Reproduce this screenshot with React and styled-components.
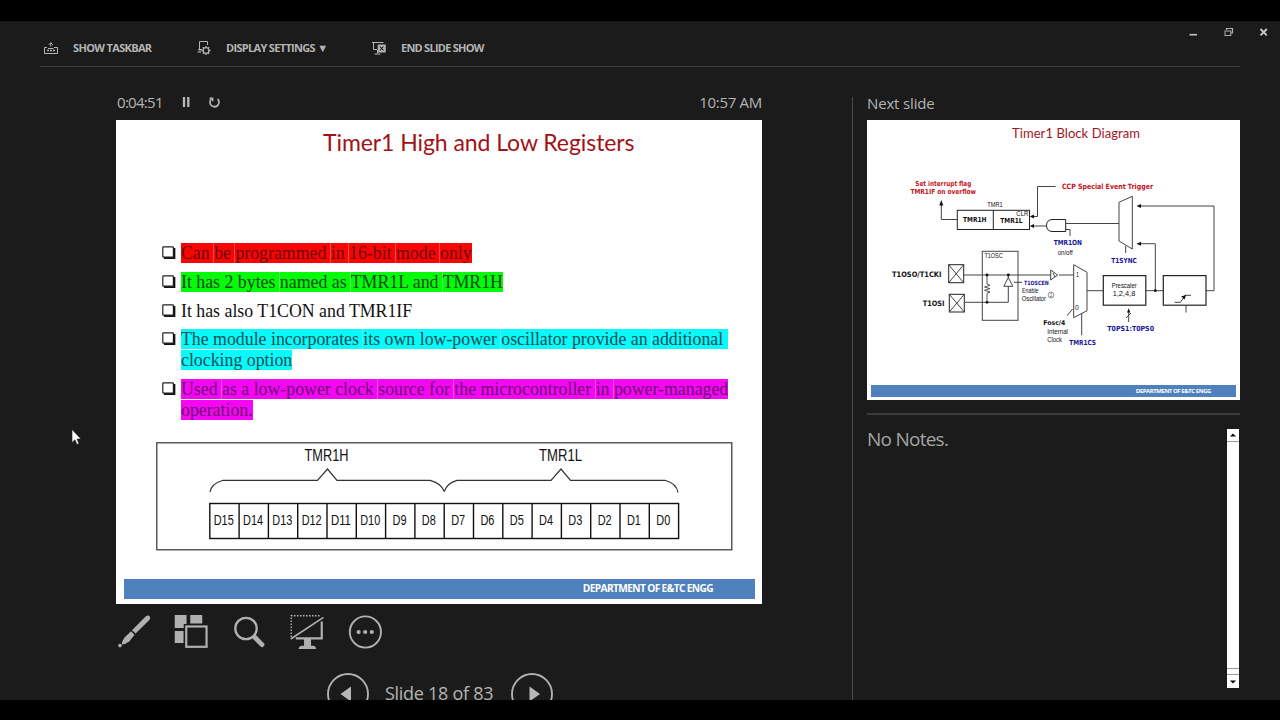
import React from "react";
import styled, { createGlobalStyle } from "styled-components";

const GlobalStyle = createGlobalStyle`
  * {
    box-sizing: border-box;
  }

  body {
    margin: 0;
    background: #000;
    font-family: "Open Sans", "Noto Sans", sans-serif;
    color: #b4b4b4;
  }

  svg {
    display: block;
    flex: none;
  }
`;

const Frame = styled.div`
  width: 1280px;
  height: 720px;
  padding: 21px 0 20px;
  overflow: hidden;
  background: #000;
`;

const Presenter = styled.main`
  position: relative;
  height: 679px;
  padding: 0 40px;
  overflow: hidden;
  background: #1b1b1b;
`;

const Toolbar = styled.header`
  display: flex;
  height: 46px;
  padding: 8px 0 0 3px;
  border-bottom: 1px solid #3c3c3c;
`;

const ToolbarButton = styled.button`
  display: flex;
  align-items: center;
  gap: 14px;
  height: 37px;
  width: ${(props) => props.$width}px;
  padding: 0;
  border: none;
  background: none;
  color: #b4b4b4;
  font: 700 11px "Open Sans", sans-serif;
  letter-spacing: ${(props) => props.$spacing}px;
  white-space: nowrap;
`;

const WindowControls = styled.div`
  display: flex;
  gap: 25.5px;
  height: 10px;
  margin: -2px -29px 0 auto;
`;

const Columns = styled.div`
  display: grid;
  grid-template-columns: 647px 373px;
  column-gap: 104px;
  height: 633px;
  padding-left: 76px;
`;

const CurrentColumn = styled.section`
  display: flex;
  flex-direction: column;
  padding-top: 25px;
`;

const TimerRow = styled.div`
  display: flex;
  align-items: center;
  height: 20px;
  margin-bottom: 8px;
  padding: 0 1px;
  font-size: 15px;
`;

const Elapsed = styled.span`
  width: 64px;
  letter-spacing: -0.7px;
`;

const Clock = styled.span`
  margin-left: auto;
  letter-spacing: -0.3px;
`;

const Slide = styled.article`
  display: flex;
  flex-direction: column;
  width: ${(props) => props.$width}px;
  height: ${(props) => props.$height}px;
  background: #fefefe;
  overflow: hidden;
`;

const SlideTitle = styled.h1`
  margin: 6px 0 0 207px;
  height: 32px;
  font: 400 23px/32px Lato, sans-serif;
  letter-spacing: -0.07px;
  color: #a11217;
  white-space: nowrap;
`;

const Bullets = styled.ul`
  display: flex;
  flex-direction: column;
  gap: 6.7px;
  margin: 85px 0 0 46px;
  padding: 0;
  height: 199px;
  list-style: none;
`;

const Bullet = styled.li`
  display: flex;
  gap: 5px;
  margin-bottom: ${(props) => props.$after || 0}px;
  font: 17.81px/21.6px "Liberation Serif", serif;
  color: #151515;
  white-space: nowrap;

  svg {
    margin-top: 3px;
  }
`;

const Highlight = styled.span`
  background: ${(props) => props.$color};
  color: ${(props) => props.$ink};
  box-shadow: ${(props) =>
    props.$seam ? "inset -1px 0 rgba(255, 255, 255, 0.28)" : "none"};
  white-space: pre;
`;

const RegisterFigure = styled.svg`
  margin-left: 40px;
`;

const SlideFooter = styled.footer`
  width: 631px;
  height: 20px;
  margin: 28px 0 0 8px;
  padding-right: 42px;
  background: #4f81bd;
  color: #fff;
  font: 700 10.2px/19px "Open Sans", sans-serif;
  letter-spacing: -0.64px;
  text-align: right;
`;

const ToolIcons = styled.div`
  display: flex;
  gap: 21.75px;
  margin-top: 10px;
`;

const Navigation = styled.nav`
  display: flex;
  align-items: center;
  height: 42px;
  margin: 23px 0 0 211px;
  font-size: 18px;
  letter-spacing: -0.28px;
`;

const NavLabel = styled.span`
  width: 125px;
  padding: 0 0 2px 16px;
  white-space: nowrap;
`;

const SideColumn = styled.section`
  display: flex;
  flex-direction: column;
  height: 603px;
  margin: 30px 0 0 -15px;
  padding-left: 14px;
  width: 388px;
  border-left: 1px solid #4a4a4a;
`;

const SideHeading = styled.h2`
  height: 20px;
  margin: -4px 0 7px;
  font-size: 15px;
  font-weight: 400;
  line-height: 20px;
  letter-spacing: -0.15px;
`;

const NextTitle = styled.h3`
  height: 18px;
  margin: 4px 0 0 145px;
  font: 400 13px/18px Lato, sans-serif;
  letter-spacing: 0.07px;
  color: #a3151c;
  white-space: nowrap;
`;

const NextFooter = styled.footer`
  width: 365px;
  height: 12px;
  margin: 6px 0 0 4px;
  padding-right: 25px;
  background: #4f81bd;
  color: #fff;
  font: 700 6px/12px "Open Sans", sans-serif;
  letter-spacing: -0.44px;
  text-align: right;
`;

const Notes = styled.div`
  display: flex;
  justify-content: space-between;
  margin-top: 13px;
  padding: 14px 1px 0 0;
  border-top: 2px solid #3c3c3c;
  font-size: 19px;
  line-height: 20px;
  letter-spacing: -0.75px;
  color: #a4a4a4;
`;

const Scrollbar = styled.div`
  display: flex;
  flex-direction: column;
  justify-content: space-between;
  width: 12px;
  height: 259px;
  background: #fff;
`;

const ScrollThumb = styled.div`
  height: 7px;
  margin-top: auto;
  border: solid #999;
  border-width: 1px 0;
`;

const ScrollButton = styled.div`
  display: grid;
  place-items: center;
  height: 13px;
  border-bottom: ${(props) => (props.$up ? "1px solid #999" : "none")};
`;

const Cursor = styled.svg`
  position: absolute;
  left: 71px;
  top: 408px;
`;

const BULLETS = [
  {
    color: "#f80505",
    ink: "#6c0b08",
    after: 1,
    lines: [["Can ", "be ", "programmed ", "in ", "16-bit ", "mode ", "only"]],
  },
  {
    color: "#05fb0a",
    ink: "#0b4a10",
    lines: [["It has 2 bytes ", "named as ", "TMR1L and ", "TMR1H"]],
  },
  { color: "none", ink: "#111", lines: [["It has also T1CON and TMR1IF"]] },
  {
    color: "#08fafa",
    ink: "#0d4e55",
    lines: [
      ["The module incorporates ", "its own low-power ", "oscillator provide an ", "additional "],
      ["clocking option"],
    ],
  },
  {
    color: "#f408f4",
    ink: "#6d0b70",
    lines: [
      ["Used ", "as a low-power clock ", "source for ", "the microcontroller ", "in ", "power-managed"],
      ["operation."],
    ],
  },
];

function BulletBox() {
  return (
    <svg width="14" height="14" viewBox="0 0 14 14">
      <rect x="0.8" y="0.8" width="10.6" height="10.4" rx="0.6" fill="#fff" stroke="#222" strokeWidth="1.2" />
      <path d="M2 12.1H12.4V2" fill="none" stroke="#111" strokeWidth="1.9" />
    </svg>
  );
}

// Text squeezed to a fixed width, from x1 to x2
function Label({ x1, x2, y, size = 6.5, bold, fill = "#111", children }) {
  return (
    <text
      x={x1}
      y={y}
      textLength={x2 - x1}
      lengthAdjust="spacingAndGlyphs"
      fontFamily={bold ? '"DejaVu Sans", sans-serif' : '"Liberation Sans", sans-serif'}
      fontWeight={bold ? 700 : 400}
      fontSize={size}
      fill={fill}
    >
      {children}
    </text>
  );
}

function Registers() {
  const cell = 29.3;
  const bits = Array.from({ length: 16 }, (_, i) => 15 - i);

  return (
    <RegisterFigure width="577" height="109" viewBox="156 442 577 109">
      <g fill="none" stroke="#333" strokeWidth="1.2">
        <rect x="156.8" y="442.8" width="575" height="107" />
        <rect x="209.8" y="503.5" width={cell * 16} height="35" stroke="#111" strokeWidth="1.4" />
        {bits.slice(1).map((bit, i) => (
          <path key={bit} d={`M${209.8 + cell * (i + 1)} 503.5V538.5`} stroke="#111" strokeWidth="1.4" />
        ))}
        <path d="M210 492Q211 484 223 480.3H317.5L327.5 469L337 480.3H430Q441 483 444.3 491.5" />
        <path d="M444.3 491.5Q447 483 457 480.3H551L561 469L570.5 480.3H665Q677 484 678 492.5" />
      </g>
      <Label x1={304.5} x2={348.5} y={460.5} size={16}>TMR1H</Label>
      <Label x1={539} x2={582} y={460.5} size={16}>TMR1L</Label>
      {bits.map((bit, i) => {
        const width = bit > 9 ? 20 : 14;
        const x = 209.8 + cell * (i + 0.5) - width / 2 - 0.7;
        return (
          <Label key={bit} x1={x} x2={x + width} y={524.8} size={14}>
            {`D${bit}`}
          </Label>
        );
      })}
    </RegisterFigure>
  );
}

function BlockDiagram() {
  const red = "#c4141c";
  const blue = "#14149c";

  return (
    <svg width="373" height="237" viewBox="867 142 373 237">
      <g fill="none" stroke="#444" strokeWidth="1">
        {/* TMR1 register pair */}
        <path d="M957 219.5H941.3V204" />
        <rect x="957.3" y="210.3" width="72.2" height="19.2" stroke="#222" />
        <path d="M993.3 210V229.5" stroke="#222" />
        <path d="M1055.5 186.5H1037.5V216.5H1033" />
        <path d="M1046.5 226H1033" />
        <path d="M1065.7 219.5H1052Q1046.5 220 1046.5 225.5Q1046.5 231 1052 231.5H1065.7Z" stroke="#222" />
        <path d="M1065.7 223.5H1119M1065.7 229.5H1070V236" />

        {/* sync multiplexer and feedback */}
        <path d="M1119 202.3L1132.3 196.3V249L1119 241ZM1125.7 246V253" />
        <path d="M1140 206H1214V290.7H1206M1140 243.7H1155.3V290.7" />

        {/* oscillator */}
        <rect x="982.3" y="251.3" width="35.7" height="69" />
        <rect x="948.7" y="264.7" width="15" height="18" stroke="#222" />
        <path d="M948.7 264.7L963.7 282.7M963.7 264.7L948.7 282.7" />
        <rect x="949.3" y="294.3" width="15" height="17.7" stroke="#222" />
        <path d="M949.3 294.3L964.3 312M964.3 294.3L949.3 312" />
        <path d="M963.7 275H1051M964.3 302.3H1008.3V286.3M1008.3 278V275" />
        <path d="M987 275V284L990 285.3L984.5 287L990 288.7L984.5 290.3L990 292L987 293.3V302.3" strokeWidth="0.9" />
        <path d="M1008.3 277.5L1003.8 286.3H1012.8ZM1013.7 282.3H1022" />
        <path d="M1050.7 270L1057.7 275L1050.7 280ZM1053 273L1055 277M1059 275H1073.7" />
        <circle cx="1051" cy="295" r="2.9" strokeWidth="0.6" />

        {/* clock multiplexer */}
        <path d="M1073.7 264.7L1087 272.3V310.7L1073.7 317.7ZM1067 315.7L1072.7 309M1081.7 313.5V335.3" />

        {/* prescaler and synchronizer */}
        <path d="M1087 290.7H1103M1146 290.7H1163" />
        <rect x="1103.3" y="275.6" width="42.5" height="29.6" stroke="#222" strokeWidth="1.2" />
        <rect x="1163.3" y="275.6" width="42.7" height="29.6" stroke="#222" strokeWidth="1.2" />
        <path d="M1174.7 302.3H1180.5L1185 295.3H1191M1186 305V312.5" />
        <path d="M1128.7 322V312M1126 318L1131 313" />
      </g>
      <g fill="#111">
        <path d="M941.3 200L939.3 205.5H943.3Z" />
        <path d="M1029.8 216.5L1034 214.5V218.5Z" />
        <path d="M1029.8 226L1034 224V228Z" />
        <path d="M1136.5 206L1141 204V208Z" />
        <path d="M1136.5 243.7L1141 241.7V245.7Z" />
        <path d="M1128.7 308.3L1127 312.5H1130.4Z" />
        <path d="M1186 295L1181.2 296.4L1184.6 299.5Z" />
        <circle cx="987" cy="275" r="1.4" />
        <circle cx="1008.3" cy="275" r="1.4" />
        <circle cx="987" cy="302.3" r="1.4" />
        <circle cx="1155.3" cy="290.7" r="1.4" />
      </g>

      <Label x1={915.3} x2={971.3} y={186.3} size={7} bold fill={red}>Set interrupt flag</Label>
      <Label x1={910.5} x2={976} y={194.2} size={7} bold fill={red}>TMR1IF on overflow</Label>
      <Label x1={1062} x2={1153} y={189} size={7.3} bold fill={red}>CCP Special Event Trigger</Label>
      <Label x1={987.3} x2={1002.7} y={207} size={7.5}>TMR1</Label>
      <Label x1={1016.3} x2={1028.3} y={216} size={7.5}>CLR</Label>
      <Label x1={963} x2={986.5} y={222} size={7} bold>TMR1H</Label>
      <Label x1={1000.3} x2={1022.5} y={222.7} size={7} bold>TMR1L</Label>
      <Label x1={1053.7} x2={1082} y={244.8} size={7} bold fill={blue}>TMR1ON</Label>
      <Label x1={1057.7} x2={1072.7} y={255.3}>on/off</Label>
      <Label x1={1111.3} x2={1136.8} y={263} size={7} bold fill={blue}>T1SYNC</Label>
      <Label x1={984.5} x2={1002.7} y={258} size={7.5}>T1OSC</Label>
      <Label x1={892} x2={941.5} y={276.5} size={7.5} bold>T1OSO/T1CKI</Label>
      <Label x1={922.7} x2={944.5} y={306.2} size={7.5} bold>T1OSI</Label>
      <Label x1={1024} x2={1048.8} y={284.8} size={5.8} bold fill={blue}>T1OSCEN</Label>
      <Label x1={1022} x2={1038.5} y={293} size={7}>Enable</Label>
      <Label x1={1021.7} x2={1046} y={301} size={7}>Oscillator</Label>
      <Label x1={1050} x2={1052} y={297} size={5}>1</Label>
      <Label x1={1076} x2={1079} y={277} size={7}>1</Label>
      <Label x1={1075} x2={1078.7} y={310} size={7}>0</Label>
      <Label x1={1043.3} x2={1065.3} y={325} bold>Fosc/4</Label>
      <Label x1={1047.3} x2={1068} y={334} size={7}>Internal</Label>
      <Label x1={1047.3} x2={1062} y={342} size={7}>Clock</Label>
      <Label x1={1069.3} x2={1096} y={345} size={7} bold fill={blue}>TMR1CS</Label>
      <Label x1={1111.7} x2={1136.7} y={288.2} size={7.5}>Prescaler</Label>
      <Label x1={1112.7} x2={1135.3} y={296.3} size={7.5}>1,2,4,8</Label>
      <Label x1={1107.3} x2={1154} y={331.3} size={7} bold fill={blue}>T0PS1:T0PS0</Label>
    </svg>
  );
}

function ToolIcon({ left, children }) {
  return (
    <svg width="36" height="36" viewBox={`${left} 614 36 36`} fill="#b0b0b0">
      {children}
    </svg>
  );
}

function App() {
  return (
    <>
      <GlobalStyle />
      <Frame>
        <Presenter>
          <Toolbar>
            <ToolbarButton $width={154} $spacing={-0.65}>
              <svg width="16" height="16" viewBox="0 0 16 16" fill="none" stroke="#b4b4b4">
                <path d="M4 7.5H1.5V13.5H14.5V7.5H11" />
                <path d="M4 10.5H6M7 10.5H9M10 10.5H12" strokeWidth="1.6" />
                <path d="M5 8.5H10.5M7.8 2.5V6.5M5.8 4.8L7.8 2.8L9.8 4.8" />
              </svg>
              SHOW TASKBAR
            </ToolbarButton>
            <ToolbarButton $width={174} $spacing={-0.68}>
              <svg width="15" height="16" viewBox="0 0 15 16" fill="none" stroke="#b4b4b4">
                <path d="M4.5 9.5H2.5V1.5H10.5V5M4 9.5L2 9.5M1 9.5H5M3 9.5V12M0.5 12H4" />
                <circle cx="9" cy="10.5" r="2.9" strokeWidth="1.3" />
                <path
                  d="M9 6V7.4M9 13.6V15M4.5 10.5H6M12 10.5H13.5M5.8 7.3L6.9 8.4M11.1 12.6L12.2 13.7M5.8 13.7L6.9 12.6M11.1 8.4L12.2 7.3"
                  strokeWidth="1.3"
                />
              </svg>
              DISPLAY SETTINGS ▼
            </ToolbarButton>
            <ToolbarButton $width={130} $spacing={-0.75}>
              <svg width="16" height="16" viewBox="0 0 16 16" fill="none" stroke="#b4b4b4">
                <path d="M1 2.5H12.5M2.5 2.5V9.5H6M6.5 10V13.5M3.5 14H9.5" />
                <rect x="7.2" y="5" width="7" height="7" fill="#b4b4b4" />
                <path d="M8.9 6.5L12.5 10.5M12.5 6.5L8.9 10.5" stroke="#1b1b1b" strokeWidth="1.1" />
              </svg>
              END SLIDE SHOW
            </ToolbarButton>
            <WindowControls>
              <svg width="10" height="10" viewBox="0 0 10 10">
                <path d="M1.5 7.7H9" stroke="#c4c4c4" strokeWidth="1.6" />
              </svg>
              <svg width="10" height="10" viewBox="0 0 10 10" fill="none" stroke="#b0b0b0">
                <path d="M2.5 3V1.5H8.5V6H7" strokeWidth="1.2" />
                <rect x="1" y="4" width="5.8" height="4.5" />
              </svg>
              <svg width="10" height="10" viewBox="0 0 10 10">
                <path d="M1.5 2L7.8 8.3M7.8 2L1.5 8.3" stroke="#c8c8c8" strokeWidth="1.9" />
              </svg>
            </WindowControls>
          </Toolbar>

          <Columns>
            <CurrentColumn>
              <TimerRow>
                <Elapsed>0:04:51</Elapsed>
                <svg width="10" height="12" viewBox="0 0 10 12">
                  <path d="M3 1V11M7.3 1V11" stroke="#b8b8b8" strokeWidth="2.3" />
                </svg>
                <svg width="32" height="14" viewBox="0 0 32 14" fill="none" stroke="#b0b0b0">
                  <path d="M26.6 4A4.5 4.5 0 1 1 20.6 3.8" strokeWidth="1.8" />
                  <path d="M18.6 3.2H21.7V6.3" strokeWidth="1.5" />
                </svg>
                <Clock>10:57 AM</Clock>
              </TimerRow>

              <Slide $width={646} $height={484}>
                <SlideTitle>Timer1 High and Low Registers</SlideTitle>
                <Bullets>
                  {BULLETS.map((bullet) => (
                    <Bullet key={bullet.lines[0][0]} $after={bullet.after}>
                      <BulletBox />
                      <div>
                        {bullet.lines.map((runs) => (
                          <div key={runs[0]}>
                            {runs.map((run, i) => (
                              <Highlight
                                key={run}
                                $color={bullet.color}
                                $ink={bullet.ink}
                                $seam={i < runs.length - 1}
                              >
                                {run}
                              </Highlight>
                            ))}
                          </div>
                        ))}
                      </div>
                    </Bullet>
                  ))}
                </Bullets>
                <Registers />
                <SlideFooter>DEPARTMENT OF E&amp;TC ENGG</SlideFooter>
              </Slide>

              <ToolIcons>
                <ToolIcon left={116}>
                  <path d="M132 630.2L145.6 616.4Q148 614.6 149.6 616.2Q151 618 149.4 620L135.6 633.4Z" />
                  <path d="M131 631.3L134.5 634.8L129.5 641.3Q126 644.2 121.7 644.6Q122 640.5 124.8 637.2Z" />
                  <circle cx="120" cy="645.6" r="1.8" />
                </ToolIcon>
                <ToolIcon left={173.75}>
                  <path d="M174.5 615H186.3V624H183.5V628H174.5ZM190 615H202V623.5H190ZM174.5 631H183.3V643H174.5Z" />
                  <rect x="186" y="626.5" width="20.3" height="20.3" fill="none" stroke="#b0b0b0" strokeWidth="2.2" />
                </ToolIcon>
                <ToolIcon left={232}>
                  <circle cx="246" cy="628.5" r="10.7" fill="none" stroke="#b0b0b0" strokeWidth="2.3" />
                  <path d="M254.5 637L262 644.6" stroke="#b0b0b0" strokeWidth="4.8" strokeLinecap="round" />
                </ToolIcon>
                <ToolIcon left={289.25}>
                  <path
                    d="M291.5 637V615.7H320.5"
                    fill="none"
                    stroke="#b0b0b0"
                    strokeWidth="1.4"
                    strokeDasharray="1.6 1.4"
                  />
                  <path d="M291 639L323.7 617.3" stroke="#b0b0b0" strokeWidth="1.6" />
                  <path d="M296 638.3H322V621.5" fill="none" stroke="#b0b0b0" strokeWidth="2.2" />
                  <path d="M304.3 638.5H311.3V645.8H314Q316 646 316.6 649H298.8Q299.3 646 301.5 645.8H304.3Z" />
                </ToolIcon>
                <ToolIcon left={347}>
                  <circle cx="365.4" cy="632" r="15.6" fill="none" stroke="#b0b0b0" strokeWidth="1.9" />
                  <circle cx="358.6" cy="632" r="2.1" />
                  <circle cx="365.2" cy="632" r="2.1" />
                  <circle cx="371.8" cy="632" r="2.1" />
                </ToolIcon>
              </ToolIcons>

              <Navigation>
                <svg width="42" height="42" viewBox="0 0 42 42">
                  <circle cx="21" cy="21" r="20" fill="none" stroke="#b0b0b0" strokeWidth="1.9" />
                  <path d="M13.5 21L24 13.5V28.5Z" fill="#b8b8b8" />
                </svg>
                <NavLabel>Slide 18 of 83</NavLabel>
                <svg width="60" height="42" viewBox="-17 0 60 42">
                  <circle cx="21" cy="21" r="20" fill="none" stroke="#b0b0b0" strokeWidth="1.9" />
                  <path d="M29 21L18.5 13.5V28.5Z" fill="#b8b8b8" />
                </svg>
              </Navigation>
            </CurrentColumn>

            <SideColumn>
              <SideHeading>Next slide</SideHeading>
              <Slide as="div" $width={373} $height={280}>
                <NextTitle>Timer1 Block Diagram</NextTitle>
                <BlockDiagram />
                <NextFooter>DEPARTMENT OF E&amp;TC ENGG</NextFooter>
              </Slide>
              <Notes>
                No Notes.
                <Scrollbar>
                  <ScrollButton $up>
                    <svg width="6" height="4" viewBox="0 0 6 4">
                      <path d="M0 3.5L3 0.5L6 3.5Z" />
                    </svg>
                  </ScrollButton>
                  <ScrollThumb />
                  <ScrollButton>
                    <svg width="6" height="4" viewBox="0 0 6 4">
                      <path d="M0 0.5L3 3.5L6 0.5Z" />
                    </svg>
                  </ScrollButton>
                </Scrollbar>
              </Notes>
            </SideColumn>
          </Columns>

          <Cursor width="12" height="17" viewBox="0 0 12 17">
            <path d="M1 0.5V13.5L4 10.8L6 15.5L8 14.6L6 10H10Z" fill="#fff" stroke="#222" strokeWidth="0.6" />
          </Cursor>
        </Presenter>
      </Frame>
    </>
  );
}

export default App;
